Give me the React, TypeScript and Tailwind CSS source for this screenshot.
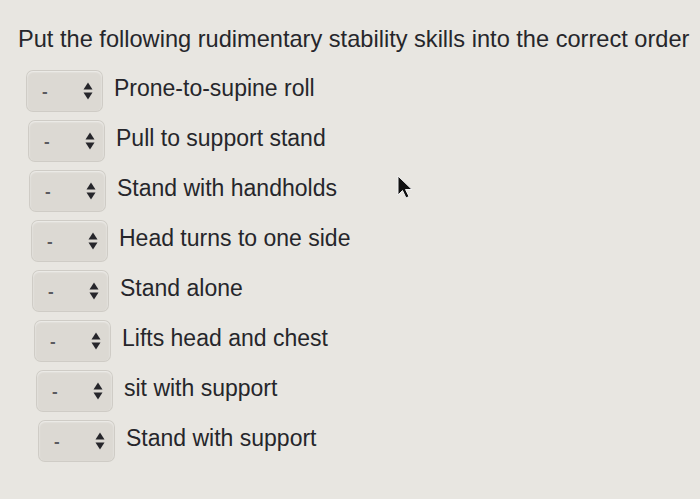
import React from 'react';

type Row = { label: string; indent: string };

const rows: Row[] = [
  { label: 'Prone-to-supine roll', indent: 'ml-[27px]' },
  { label: 'Pull to support stand', indent: 'ml-[29px]' },
  { label: 'Stand with handholds', indent: 'ml-[30px]' },
  { label: 'Head turns to one side', indent: 'ml-[32px]' },
  { label: 'Stand alone', indent: 'ml-[33px]' },
  { label: 'Lifts head and chest', indent: 'ml-[35px]' },
  { label: 'sit with support', indent: 'ml-[37px]' },
  { label: 'Stand with support', indent: 'ml-[39px]' },
];

const Stepper = () => (
  <svg width="10" height="18" viewBox="0 0 10 18" className="shrink-0">
    <path d="M5 0.5 L9.5 7.5 L0.5 7.5 Z" fill="#26262b" />
    <path d="M0.5 10.5 L9.5 10.5 L5 17.5 Z" fill="#26262b" />
  </svg>
);

const SelectBox = () => (
  <div className="w-[75px] h-[40px] shrink-0 rounded-md bg-[#dcd9d3] shadow-[0_0_0_1px_#cfccc6,inset_0_1px_2px_rgba(255,255,255,0.6)] flex items-center pl-[15px] pr-[9px]">
    <span className="text-[17px] font-bold text-[#5a5a5f] leading-none">-</span>
    <span className="ml-auto flex items-center">
      <Stepper />
    </span>
  </div>
);

export default function App() {
  return (
    <div
      className="relative w-[700px] h-[499px] overflow-hidden bg-[#e8e6e1] text-[#26262b]"
      style={{ fontFamily: '"Liberation Sans", Arial, sans-serif' }}
    >
      <div className="pt-[25px] pl-[18px] text-[23.6px] leading-[28px] whitespace-nowrap">
        Put the following rudimentary stability skills into the correct order
      </div>
      <div className="mt-[18px] flex flex-col gap-[10px]">
        {rows.map((r) => (
          <div key={r.label} className={`${r.indent} flex items-center gap-[12px]`}>
            <SelectBox />
            <span className="text-[23px] leading-none -mt-[6px] whitespace-nowrap">{r.label}</span>
          </div>
        ))}
      </div>
      {/* mouse pointer */}
      <svg className="absolute left-[397px] top-[175px]" width="17" height="26" viewBox="0 0 17 26">
        <path d="M1 1 L1 20 L5.5 15.5 L9 23 L12 21.5 L8.5 14.5 L15 14.5 Z" fill="#111" stroke="#f2f2f2" strokeWidth="1" />
      </svg>
    </div>
  );
}
